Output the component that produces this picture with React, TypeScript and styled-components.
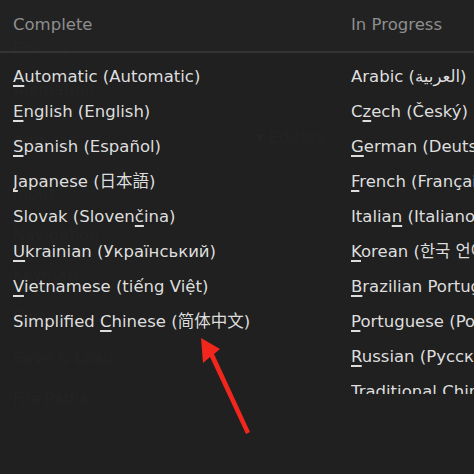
import React from 'react';
import styled, {createGlobalStyle} from "styled-components";

const GlobalStyle = createGlobalStyle`
  html, body {
    margin: 0;
    padding: 0;
    background: #222222;
  }
  * { box-sizing: border-box; }
`

type Lang = { name: string; key?: number }

const complete: Lang[] = [
   {name: "Automatic (Automatic)", key: 0},
   {name: "English (English)", key: 0},
   {name: "Spanish (Español)", key: 0},
   {name: "Japanese (日本語)", key: 0},
   {name: "Slovak (Slovenčina)", key: 14},
   {name: "Ukrainian (Український)", key: 0},
   {name: "Vietnamese (tiếng Việt)", key: 0},
   {name: "Simplified Chinese (简体中文)", key: 11},
];

const inProgress: Lang[] = [
   {name: "Arabic (العربية)"},
   {name: "Czech (Český)", key: 1},
   {name: "German (Deutsch)", key: 0},
   {name: "French (Français)", key: 0},
   {name: "Italian (Italiano)", key: 6},
   {name: "Korean (한국 언어)", key: 0},
   {name: "Brazilian Portuguese (Português do Brasil)", key: 0},
   {name: "Portuguese (Português)", key: 0},
   {name: "Russian (Русский)", key: 0},
   {name: "Traditional Chinese (繁體中文)"},
];

const sidebar = [
   {label: "Editing", gap: 28},
   {label: "Animation", gap: 0},
   {label: "Add-ons", gap: 10},
   {label: "Input", gap: 12},
   {label: "Navigation", gap: 0},
   {label: "Keymap", gap: 0},
   {label: "System", gap: 0},
   {label: "Save & Load", gap: 0},
   {label: "File Paths", gap: 0},
];

const Label = ({lang}: { lang: Lang }) => {
   if (lang.key === undefined) return <>{lang.name}</>;
   const chars = Array.from(lang.name);
   return (
      <>
         {chars.slice(0, lang.key).join("")}
         <Key>{chars[lang.key]}</Key>
         {chars.slice(lang.key + 1).join("")}
      </>
   );
};

export default function App() {
   return (
      <Stage>
         <GlobalStyle/>
         <Backdrop>
            <Sidebar>
               {sidebar.map(s => (
                  <SideItem key={s.label} gap={s.gap}>{s.label}</SideItem>
               ))}
            </Sidebar>
            <Panel>
               <PanelHead>▾ Editors</PanelHead>
            </Panel>
         </Backdrop>

         <Menu>
            <HeaderRow>
               <HeaderCell>Complete</HeaderCell>
               <HeaderCell>In Progress</HeaderCell>
            </HeaderRow>
            <Columns>
               <Column>
                  {complete.map(l => <Item key={l.name}><Label lang={l}/></Item>)}
               </Column>
               <Column>
                  {inProgress.map(l => <Item key={l.name}><Label lang={l}/></Item>)}
               </Column>
            </Columns>
         </Menu>

         <Arrow width="474" height="474" viewBox="0 0 474 474">
            <polygon
               points="201,338 203,363 210,357 246,434 250,432 214,354 220,349"
               fill="#f1271d"
            />
         </Arrow>
      </Stage>
   );
}

const Stage = styled.div`
    position: relative;
    width: 474px;
    height: 474px;
    overflow: hidden;
    background: #222222;
    font-family: "DejaVu Sans", "Noto Sans CJK SC", "Noto Sans CJK KR", sans-serif;
`

const Backdrop = styled.div`
    display: flex;
    height: 100%;
`

const Sidebar = styled.ul`
    width: 232px;
    margin: 0;
    padding: 0 0 0 13px;
    list-style: none;
    border-right: 1px solid #262626;
`

const SideItem = styled.li<{ gap: number }>`
    height: 41px;
    line-height: 41px;
    margin-top: ${p => p.gap}px;
    font-size: 16px;
    color: #3c3c3c;
`

const Panel = styled.div`
    flex: 1;
    padding: 128px 0 0 24px;
`

const PanelHead = styled.div`
    font-size: 16px;
    color: #3c3c3c;
`

const Menu = styled.div`
    position: absolute;
    inset: 0;
    background: rgba(32, 32, 32, 0.9);
    color: #dedede;
    font-size: 16.5px;
`

const HeaderRow = styled.div`
    display: grid;
    grid-template-columns: 338px 1fr;
    height: 53px;
    padding: 15px 0 0 13px;
    border-bottom: 2px solid #343434;
    background: rgba(36, 36, 36, 0.6);
`

const HeaderCell = styled.div`
    color: #8e8e8e;
    white-space: nowrap;
`

const Columns = styled.div`
    display: grid;
    grid-template-columns: 338px 1fr;
    padding: 6px 0 0 13px;
`

const Column = styled.div`
    height: 335px;
    overflow: hidden;
`

const Item = styled.div`
    height: 35px;
    line-height: 35px;
    white-space: nowrap;
`

const Key = styled.span`
    text-decoration: underline;
    text-decoration-thickness: 1.5px;
    text-underline-offset: 3px;
`

const Arrow = styled.svg`
    position: absolute;
    left: 0;
    top: 0;
    pointer-events: none;
`
